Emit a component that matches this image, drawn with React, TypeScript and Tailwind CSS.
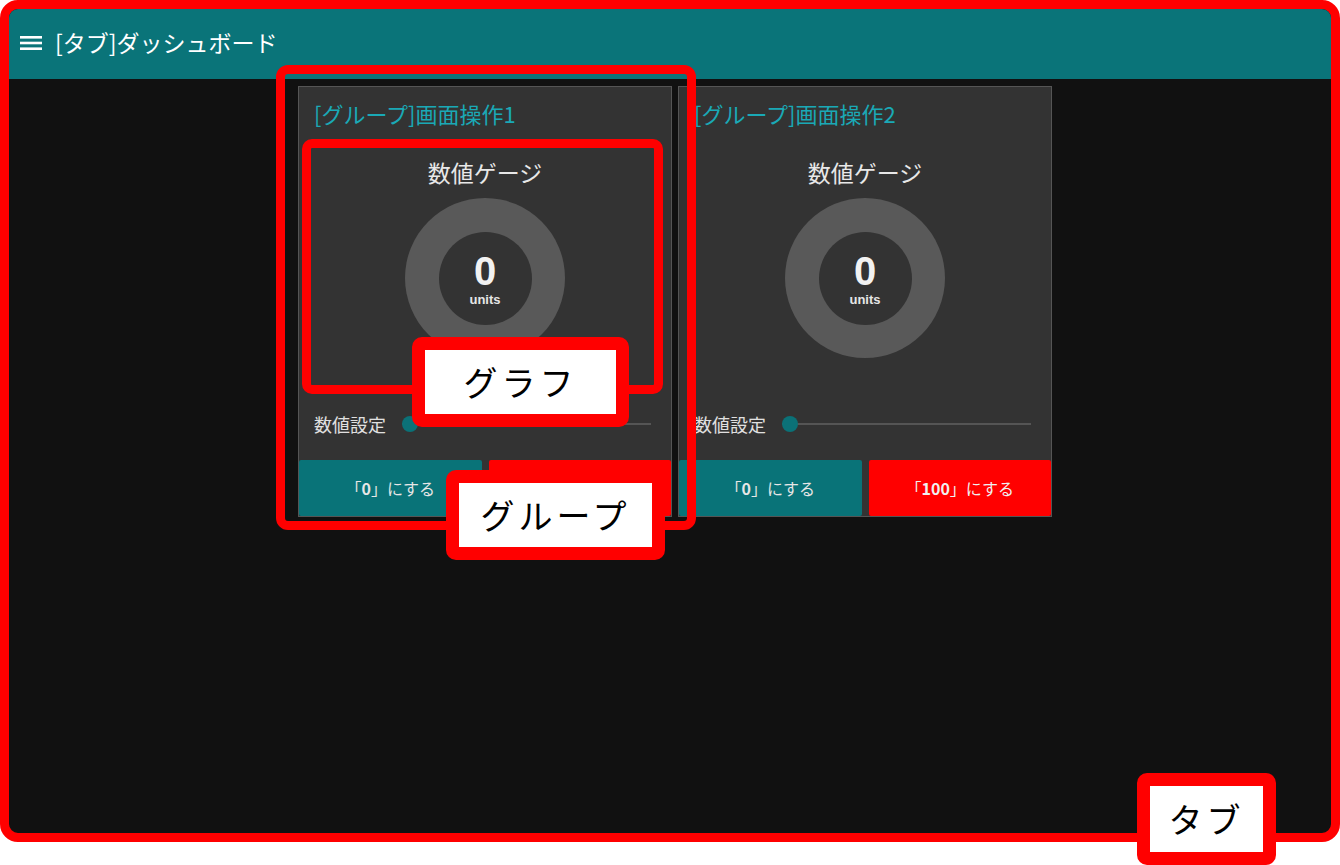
import React from "react";

const FONT = { fontFamily: '"Noto Sans CJK JP", "Noto Sans", sans-serif' };

function Gauge() {
  return (
    <div className="relative w-[160px] h-[160px] mt-[14px] rounded-full bg-[#595959] flex items-center justify-center">
      <div className="w-[93px] h-[93px] rounded-full bg-[#333333] flex flex-col items-center justify-center">
        <div
          className="text-[40px] leading-[40px] font-bold text-[#f2f2f2] mt-[2px]"
          style={{ fontFamily: '"Liberation Sans", Arial, sans-serif' }}
        >
          0
        </div>
        <div
          className="text-[13px] leading-[16px] font-bold text-[#e6e6e6] mt-[1px]"
          style={{ fontFamily: '"Liberation Sans", Arial, sans-serif' }}
        >
          units
        </div>
      </div>
    </div>
  );
}

function Group({ title }: { title: string }) {
  return (
    <div className="w-[374px] h-[431px] border border-[#555555] bg-[#333333] flex flex-col">
      <div className="h-[53px] pt-[13px] px-[15px]">
        <div className="text-[22px] leading-[26px] text-[#1aa9b6] whitespace-nowrap">{title}</div>
      </div>
      <div className="h-[262px] flex flex-col items-center">
        <div className="pt-[21px] text-[23px] leading-[23px] text-[#e8e8e8]">数値ゲージ</div>
        <Gauge />
      </div>
      <div className="h-[44px] flex items-center pl-[15px] pr-[20px]">
        <div className="text-[18px] leading-[22px] text-[#e0e0e0] whitespace-nowrap -mt-[1px]">数値設定</div>
        <div className="flex-1 ml-[16px] relative h-[16px] flex items-center">
          <div className="h-[2px] w-full bg-[#555555]" />
          <div className="absolute left-0 top-0 w-[16px] h-[16px] rounded-full bg-[#0b7177]" />
        </div>
      </div>
      <div className="h-[14px]" />
      <div className="h-[56px] flex gap-[7px]">
        <div className="flex-1 bg-[#097378] rounded-[2px] flex items-center justify-center text-[16px] text-[#e6e6e6]">
          「<span className="font-bold">0</span>」にする
        </div>
        <div className="flex-1 bg-[#ff0000] rounded-[2px] flex items-center justify-center text-[16px] text-[#f0f0f0]">
          「<span className="font-bold">100</span>」にする
        </div>
      </div>
    </div>
  );
}

function Label({
  text,
  left,
  top,
  w,
  h,
}: {
  text: string;
  left: number;
  top: number;
  w: number;
  h: number;
}) {
  return (
    <div
      className="absolute border-[13px] border-[#ff0000] rounded-[10px] bg-white flex items-center justify-center text-black text-[34px] tracking-[4px] leading-none"
      style={{ left, top, width: w, height: h }}
    >
      {text}
    </div>
  );
}

export default function App() {
  return (
    <div className="relative w-[1340px] h-[865px] bg-white overflow-hidden" style={FONT}>
      <div className="w-[1340px] h-[842px] border-[9px] border-[#ff0000] rounded-[18px] overflow-hidden flex flex-col bg-[#111111]">
        <div className="h-[70px] bg-[#0a7479] flex items-center pl-[11px] pb-[5px]">
          <svg width="22" height="16" viewBox="0 0 22 16" className="mr-[13px] mt-[2px]">
            <rect x="0" y="1" width="22" height="2.6" fill="#ffffff" />
            <rect x="0" y="6.7" width="22" height="2.6" fill="#ffffff" />
            <rect x="0" y="12.4" width="22" height="2.6" fill="#ffffff" />
          </svg>
          <div className="text-[23px] leading-[28px] text-white whitespace-nowrap">[タブ]ダッシュボード</div>
        </div>
        <div className="flex-1 flex gap-[6px] pl-[289px] pt-[7px]">
          <Group title="[グループ]画面操作1" />
          <Group title="[グループ]画面操作2" />
        </div>
      </div>

      {/* annotation overlays */}
      <div className="absolute left-[276px] top-[65px] w-[420px] h-[465px] border-[9px] border-[#ff0000] rounded-[12px]" />
      <div className="absolute left-[302px] top-[139px] w-[361px] h-[255px] border-[9px] border-[#ff0000] rounded-[10px]" />
      <Label text="グラフ" left={412} top={337} w={217} h={90} />
      <Label text="グループ" left={446} top={470} w={219} h={90} />
      <Label text="タブ" left={1137} top={773} w={139} h={92} />
    </div>
  );
}
